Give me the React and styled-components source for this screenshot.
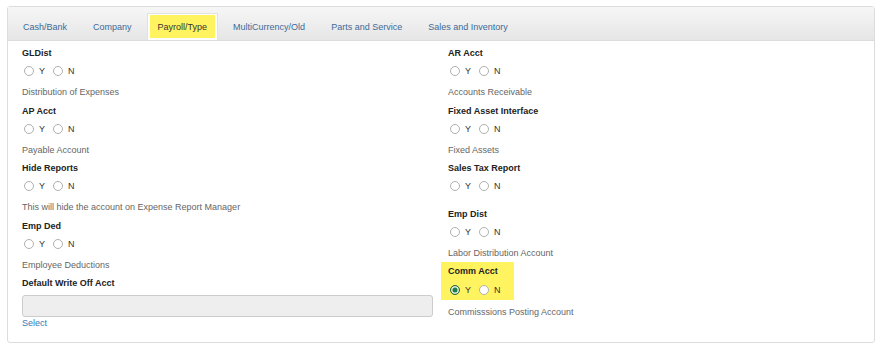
import React from "react";
import styled, { createGlobalStyle } from "styled-components";

const GlobalStyle = createGlobalStyle`
  body {
    margin: 0;
    background: #fff;
    font-family: "Liberation Sans", Arial, sans-serif;
  }
`;

const Panel = styled.div`
  margin: 6px 8px 0 7px;
  border: 1px solid #dcdcdc;
  border-radius: 3px;
  background: #fff;
`;

const TabBar = styled.div`
  display: flex;
  align-items: flex-end;
  height: 33px;
  padding-left: 2px;
  background: linear-gradient(#f6f6f6, #e6e6e6);
  border-bottom: 1px solid #dcdcdc;
`;

const Tab = styled.div`
  display: flex;
  align-items: center;
  height: 27px;
  box-sizing: border-box;
  padding: ${(p) => (p.$active ? "1px 2px 2px" : "0 13px 0 13px")};
  margin: ${(p) => (p.$active ? "0 2px 0 2px" : "0")};
  background: ${(p) => (p.$active ? "#fff" : "transparent")};
  border: ${(p) => (p.$active ? "1px solid #e2e2e2" : "none")};
  border-bottom: none;
  font-size: 9px;
  color: ${(p) => (p.$active ? "#333" : "#3d6a98")};
  &:first-child {
    padding-left: 13px;
  }
`;

const Highlight = styled.span`
  display: flex;
  align-items: center;
  height: 100%;
  padding: 0 8px;
  background: #fff35f;
`;

const Body = styled.div`
  display: grid;
  grid-template-columns: 411px 411px;
  column-gap: 15px;
  padding: 4px 15px 12px 14px;
`;

const Column = styled.div`
  display: flex;
  flex-direction: column;
`;

const Field = styled.div`
  display: flex;
  flex-direction: column;
  align-items: flex-start;
  padding-bottom: 1.5px;
`;

const Marked = styled.div`
  display: flex;
  flex-direction: column;
  margin: -1px 0 0 -7px;
  padding: 1px 7px 1px;
  background: #fff35f;
`;

const Label = styled.div`
  font-size: 9px;
  font-weight: bold;
  line-height: 17px;
  color: #222;
`;

const RadioRow = styled.div`
  display: flex;
  align-items: center;
  height: 18px;
  ${(p) => p.$tall && "height: 19px;"}
`;

const Option = styled.label`
  display: inline-flex;
  align-items: center;
  gap: 5px;
  margin-right: 6px;
  font-size: 9px;
  color: #333;
`;

const Radio = styled.input.attrs({ type: "radio" })`
  appearance: none;
  width: 10px;
  height: 10px;
  margin: 0 0 0 2px;
  border: 1px solid #b0b0b0;
  border-radius: 50%;
  background: #fff;
  &:checked {
    border-color: #2f6b47;
    background: #1f7a4c;
    box-shadow: inset 0 0 0 1.5px #e9f2d8;
  }
`;

const Help = styled.div`
  margin-top: ${(p) => (p.$empty ? "0" : "3px")};
  height: ${(p) => (p.$empty ? "9px" : "18px")};
  line-height: 18px;
  font-size: 9px;
  color: #666;
`;

const Lookup = styled.div`
  margin-top: 2.5px;
  width: 100%;
  height: 22px;
  box-sizing: border-box;
  background: #eee;
  border: 1px solid #ccc;
  border-radius: 3px;
`;

const Link = styled.a`
  font-size: 9px;
  line-height: 12px;
  color: #337ab7;
  text-decoration: none;
`;

const tabs = [
  "Cash/Bank",
  "Company",
  "Payroll/Type",
  "MultiCurrency/Old",
  "Parts and Service",
  "Sales and Inventory",
];

const left = [
  { name: "gldist", label: "GLDist", help: "Distribution of Expenses" },
  { name: "apacct", label: "AP Acct", help: "Payable Account" },
  { name: "hiderep", label: "Hide Reports", help: "This will hide the account on Expense Report Manager" },
  { name: "empded", label: "Emp Ded", help: "Employee Deductions" },
];

const right = [
  { name: "aracct", label: "AR Acct", help: "Accounts Receivable" },
  { name: "fixed", label: "Fixed Asset Interface", help: "Fixed Assets" },
  { name: "salestax", label: "Sales Tax Report", help: "" },
  { name: "empdist", label: "Emp Dist", help: "Labor Distribution Account" },
  { name: "comm", label: "Comm Acct", help: "Commisssions Posting Account", value: "Y", marked: true },
];

function YesNo({ name, value, tall }) {
  return (
    <RadioRow $tall={tall}>
      <Option>
        <Radio name={name} defaultChecked={value === "Y"} />Y
      </Option>
      <Option>
        <Radio name={name} defaultChecked={value === "N"} />N
      </Option>
    </RadioRow>
  );
}

function YesNoField({ f }) {
  const head = (
    <>
      <Label>{f.label}</Label>
      <YesNo name={f.name} value={f.value} tall={f.marked} />
    </>
  );
  return (
    <Field>
      {f.marked ? <Marked>{head}</Marked> : head}
      <Help $empty={!f.help}>{f.help}</Help>
    </Field>
  );
}

export default function App() {
  return (
    <>
      <GlobalStyle />
      <Panel>
        <TabBar>
          {tabs.map((t) =>
            t === "Payroll/Type" ? (
              <Tab key={t} $active>
                <Highlight>{t}</Highlight>
              </Tab>
            ) : (
              <Tab key={t}>{t}</Tab>
            )
          )}
        </TabBar>
        <Body>
          <Column>
            {left.map((f) => (
              <YesNoField key={f.name} f={f} />
            ))}
            <Field>
              <Label>Default Write Off Acct</Label>
              <Lookup />
              <Link href="#">Select</Link>
            </Field>
          </Column>
          <Column>
            {right.map((f) => (
              <YesNoField key={f.name} f={f} />
            ))}
          </Column>
        </Body>
      </Panel>
    </>
  );
}
